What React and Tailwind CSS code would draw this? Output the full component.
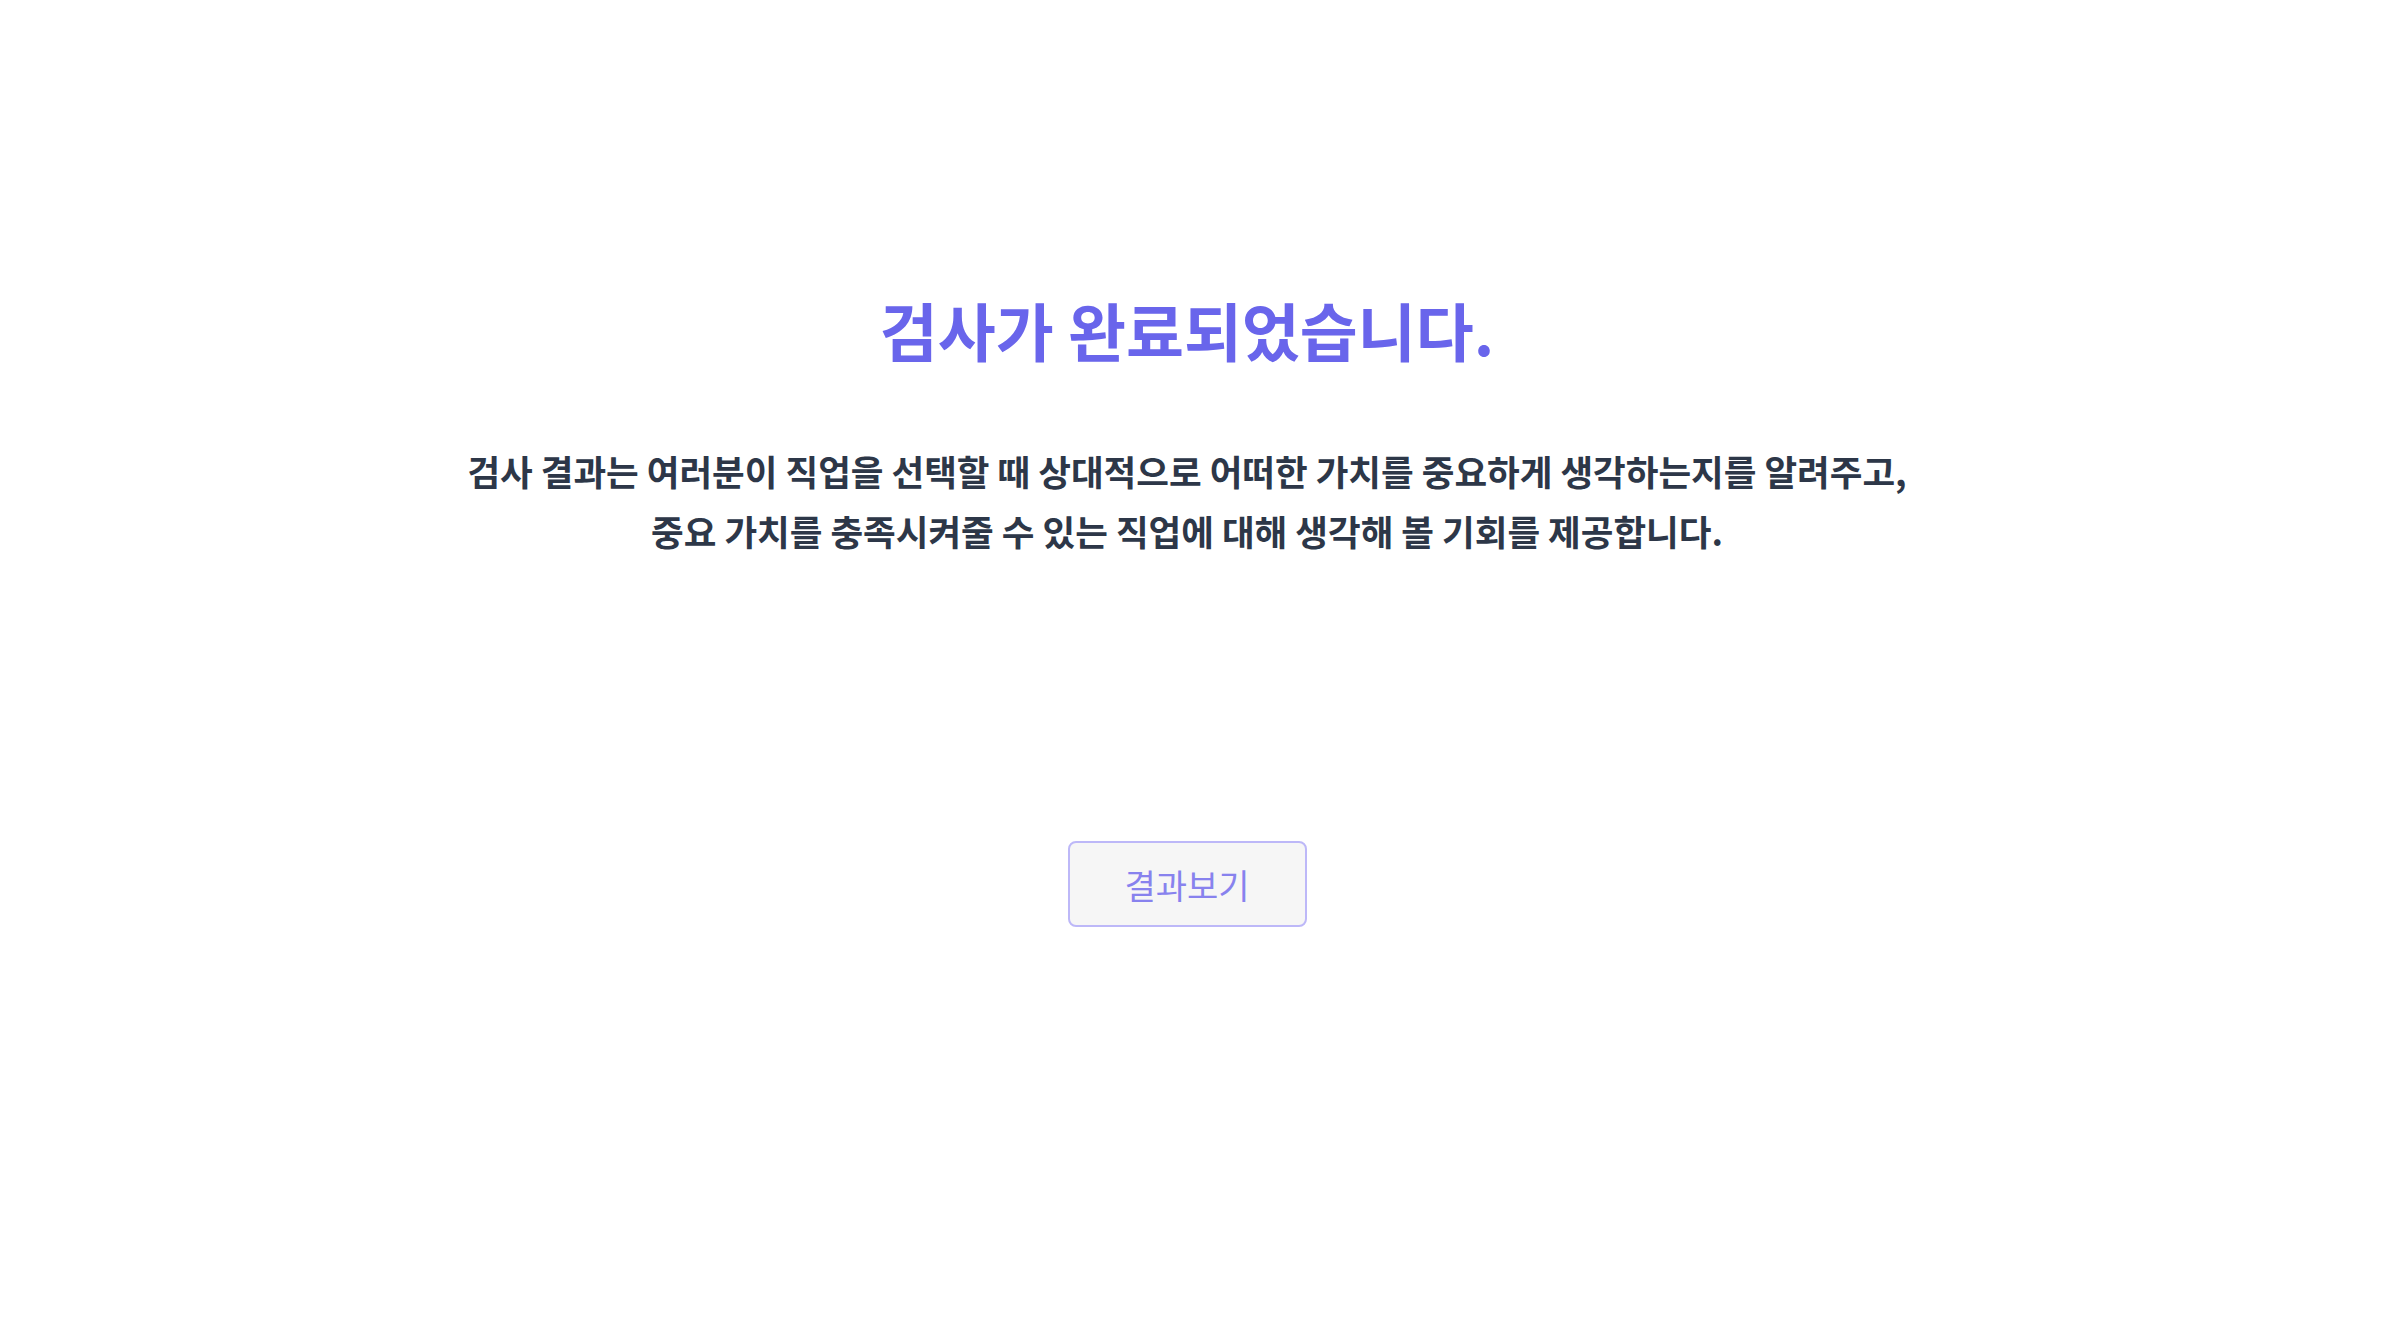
const FONT = '"Noto Sans CJK KR", "Noto Sans", sans-serif';

export default function App() {
  return (
    <div className="min-h-screen bg-white" style={{ fontFamily: FONT }}>
      <div className="mr-[28px] flex flex-col items-center pt-[289px]">
        <h1 className="text-[63px] leading-[80px] font-bold text-[#6965eb]">
          검사가 완료되었습니다.
        </h1>
        <p className="mt-[72px] text-center text-[35.5px] leading-[60px] font-bold text-[#2d3748]">
          검사 결과는 여러분이 직업을 선택할 때 상대적으로 어떠한 가치를 중요하게 생각하는지를 알려주고,
          <br />
          중요 가치를 충족시켜줄 수 있는 직업에 대해 생각해 볼 기회를 제공합니다.
        </p>
        <button
          type="button"
          className="mt-[280px] flex h-[86px] w-[239px] items-center justify-center rounded-[8px] border-2 border-[#bdb8f8] bg-[#f6f6f6] text-[34px] text-[#8882ee]"
        >
          결과보기
        </button>
      </div>
    </div>
  );
}
